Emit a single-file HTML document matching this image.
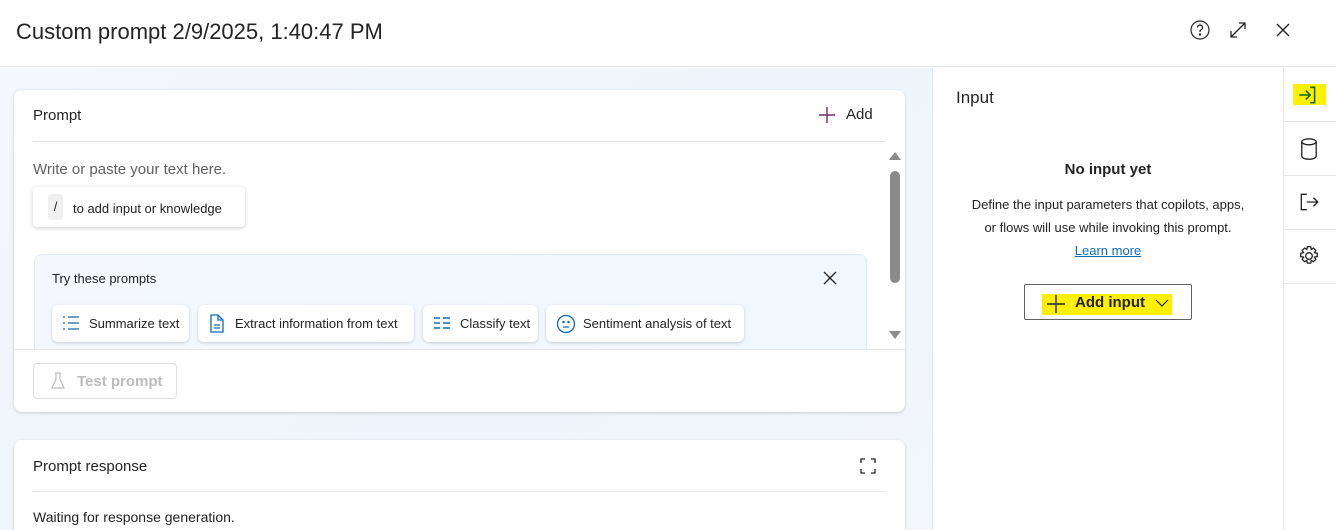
<!DOCTYPE html>
<html style="width:1336px;height:530px;overflow:hidden"><head><style>
*{box-sizing:border-box;margin:0;padding:0}
body{width:1336px;height:530px;overflow:hidden;font-family:"Liberation Sans",sans-serif;background:#fff;position:relative;color:#242424}
.abs{position:absolute}
.hdr{left:0;top:0;width:1336px;height:67px;border-bottom:1px solid #e6e6e6;background:#fff}
.left{left:0;top:68px;width:932px;height:462px;background:linear-gradient(135deg,#f4f7fb,#eef5fc 60%,#f3f7fb)}
.card{background:#fff;border-radius:8px;box-shadow:0 1px 3px rgba(0,0,0,.18)}
.chip{position:absolute;top:305px;height:37px;background:#fff;border-radius:6px;box-shadow:0 1px 3px rgba(0,0,0,.18);font-size:13px;line-height:37px;padding-left:37px;color:#242424}
.chip svg{position:absolute;left:10px;top:9px}
</style></head><body>
<div class="abs hdr"></div>
<div class="abs" style="left:16px;top:19px;font-size:22px;color:#242424">Custom prompt 2/9/2025, 1:40:47 PM</div>
<svg class="abs" style="left:1189px;top:19px" width="22" height="22" viewBox="0 0 22 22" fill="none" stroke="#242424" stroke-width="1.2"><circle cx="11" cy="11" r="9"/><path d="M8.5 8.5a2.5 2.5 0 1 1 3.5 2.3c-.7.3-1 .8-1 1.5v.7"/><circle cx="11" cy="15.5" r=".6" fill="#242424"/></svg>
<svg class="abs" style="left:1228px;top:20px" width="20" height="20" viewBox="0 0 20 20" fill="none" stroke="#242424" stroke-width="1.3"><path d="M3 17L17 3M11 3h6v6M3 11v6h6"/></svg>
<svg class="abs" style="left:1274px;top:21px" width="18" height="18" viewBox="0 0 18 18" stroke="#242424" stroke-width="1.4"><path d="M3 3l12 12M15 3L3 15"/></svg>

<div class="abs left"></div>
<div class="abs card" style="left:14px;top:90px;width:891px;height:322px"></div>
<div class="abs" style="left:33px;top:107px;font-size:15px">Prompt</div>
<svg class="abs" style="left:818px;top:106px" width="18" height="18" viewBox="0 0 18 18" stroke="#742774" stroke-width="1.4"><path d="M9 1v16M1 9h16"/></svg>
<div class="abs" style="left:846px;top:106px;font-size:15px">Add</div>
<div class="abs" style="left:33px;top:141px;width:852px;border-top:1px solid #e6e6e6"></div>
<div class="abs" style="left:33px;top:161px;font-size:15px;color:#616161">Write or paste your text here.</div>
<div class="abs" style="left:33px;top:187px;width:212px;height:40px;background:#fff;border-radius:4px;box-shadow:0 1px 4px rgba(0,0,0,.2)"></div>
<div class="abs" style="left:48px;top:194px;width:15px;height:26px;background:#f0f0f0;border-radius:3px;font-size:13px;line-height:26px;text-align:center">/</div>
<div class="abs" style="left:73px;top:201px;font-size:13px">to add input or knowledge</div>
<div class="abs" style="left:34px;top:254px;width:833px;height:96px;border:1px solid #dfe9f6;border-bottom:none;border-radius:8px 8px 0 0;background:linear-gradient(90deg,#f4f8fd,#f0f7fd)"></div>
<div class="abs" style="left:52px;top:271px;font-size:13px">Try these prompts</div>
<svg class="abs" style="left:822px;top:270px" width="16" height="16" viewBox="0 0 16 16" stroke="#242424" stroke-width="1.3"><path d="M2 2l12 12M14 2L2 14"/></svg>
<div class="chip" style="left:52px;width:137px">Summarize text<svg width="18" height="18" viewBox="0 0 18 18" stroke="#0f6cbd" stroke-width="1.3"><path d="M1 3h2M6 3h11M1 9h2M6 9h11M1 15h2M6 15h11"/></svg></div>
<div class="chip" style="left:198px;width:216px">Extract information from text<svg width="18" height="20" viewBox="0 0 18 20" fill="none" stroke="#0f6cbd" stroke-width="1.3"><path d="M3 1h7l5 5v12H3zM10 1v5h5M6 11h6M6 14h6"/></svg></div>
<div class="chip" style="left:423px;width:115px">Classify text<svg width="18" height="18" viewBox="0 0 18 18" stroke="#0f6cbd" stroke-width="1.6"><path d="M1 4h6M10 4h7M1 9h6M10 9h7M1 14h6M10 14h7"/></svg></div>
<div class="chip" style="left:546px;width:198px">Sentiment analysis of text<svg width="20" height="20" viewBox="0 0 20 20" fill="none" stroke="#0f6cbd" stroke-width="1.3"><circle cx="10" cy="10" r="8.5"/><circle cx="7.5" cy="8" r=".6" fill="#0f6cbd"/><circle cx="12.5" cy="8" r=".6" fill="#0f6cbd"/><path d="M7 13h6"/></svg></div>
<div class="abs" style="left:14px;top:349px;width:891px;border-top:1px solid #e6e6e6"></div>
<svg class="abs" style="left:888px;top:151px" width="14" height="10"><path d="M1 9L7 1l6 8z" fill="#8a8a8a"/></svg>
<div class="abs" style="left:890px;top:171px;width:10px;height:112px;background:#8a8a8a;border-radius:5px"></div>
<svg class="abs" style="left:888px;top:330px" width="14" height="10"><path d="M1 1h12L7 9z" fill="#8a8a8a"/></svg>
<div class="abs" style="left:33px;top:363px;width:144px;height:36px;border:1px solid #e0e0e0;border-radius:4px"></div>
<svg class="abs" style="left:50px;top:372px" width="16" height="18" viewBox="0 0 16 18" fill="none" stroke="#bdbdbd" stroke-width="1.2"><path d="M5 1h6M6 1v6L2 16h12L10 7V1"/></svg>
<div class="abs" style="left:77px;top:373px;font-size:15px;font-weight:bold;color:#bdbdbd">Test prompt</div>

<div class="abs card" style="left:14px;top:440px;width:891px;height:90px;border-radius:8px 8px 0 0"></div>
<div class="abs" style="left:33px;top:458px;font-size:15px">Prompt response</div>
<svg class="abs" style="left:860px;top:458px" width="16" height="16" viewBox="0 0 16 16" fill="none" stroke="#242424" stroke-width="1.3"><path d="M1 5V1h4M11 1h4v4M15 11v4h-4M5 15H1v-4"/></svg>
<div class="abs" style="left:33px;top:491px;width:852px;border-top:1px solid #e6e6e6"></div>
<div class="abs" style="left:33px;top:509px;font-size:14px">Waiting for response generation.</div>

<div class="abs" style="left:932px;top:68px;width:1px;height:462px;background:#e6e6e6"></div>
<div class="abs" style="left:956px;top:88px;font-size:17px">Input</div>
<div class="abs" style="left:933px;top:161px;width:350px;text-align:center;font-size:15px;font-weight:bold">No input yet</div>
<div class="abs" style="left:933px;top:193px;width:350px;text-align:center;font-size:13px;line-height:23px">Define the input parameters that copilots, apps,<br>or flows will use while invoking this prompt.<br><span style="color:#0f6cbd;text-decoration:underline">Learn more</span></div>
<div class="abs" style="left:1024px;top:284px;width:168px;height:36px;border:1px solid #616161;border-radius:2px"></div>
<div class="abs" style="left:1042px;top:294px;width:130px;height:21px;background:#fff000"></div>
<svg class="abs" style="left:1046px;top:294px" width="20" height="20" viewBox="0 0 20 20" stroke="#242424" stroke-width="1.4"><path d="M10 1v18M1 10h18"/></svg>
<div class="abs" style="left:1075px;top:294px;font-size:15px;font-weight:bold">Add input</div>
<svg class="abs" style="left:1155px;top:298px" width="14" height="10" viewBox="0 0 14 10" fill="none" stroke="#242424" stroke-width="1.2"><path d="M1 2l6 6 6-6"/></svg>

<div class="abs" style="left:1283px;top:68px;width:1px;height:462px;background:#e6e6e6"></div>
<div class="abs" style="left:1284px;top:121px;width:52px;border-top:1px solid #e6e6e6"></div>
<div class="abs" style="left:1284px;top:175px;width:52px;border-top:1px solid #e6e6e6"></div>
<div class="abs" style="left:1284px;top:229px;width:52px;border-top:1px solid #e6e6e6"></div>
<div class="abs" style="left:1284px;top:283px;width:52px;border-top:1px solid #e6e6e6"></div>
<div class="abs" style="left:1293px;top:84px;width:33px;height:21px;background:#fff000"></div>
<svg class="abs" style="left:1297px;top:84px" width="22" height="22" viewBox="0 0 20 20" fill="none" stroke="#0b6a0b" stroke-width="1.4"><path d="M12 3h4v14h-4M2 10h10M8 6l4 4-4 4"/></svg>
<svg class="abs" style="left:1298px;top:137px" width="22" height="24" viewBox="0 0 18 20" fill="none" stroke="#242424" stroke-width="1.1"><ellipse cx="9" cy="4" rx="6" ry="2.5"/><path d="M3 4v12c0 1.4 2.7 2.5 6 2.5s6-1.1 6-2.5V4"/></svg>
<svg class="abs" style="left:1298px;top:191px" width="22" height="22" viewBox="0 0 20 20" fill="none" stroke="#242424" stroke-width="1.2"><path d="M8 3H3v14h5M8 10h10M14 6l4 4-4 4"/></svg>
<svg class="abs" style="left:1298px;top:245px" width="22" height="22" viewBox="0 0 20 20" fill="none" stroke="#242424" stroke-width="1.2"><circle cx="10" cy="10" r="3"/><path d="M8.5 1.5h3l.5 2.5 2-1.2 2.2 2.2-1.2 2 2.5.5v3l-2.5.5 1.2 2-2.2 2.2-2-1.2-.5 2.5h-3l-.5-2.5-2 1.2-2.2-2.2 1.2-2-2.5-.5v-3l2.5-.5-1.2-2 2.2-2.2 2 1.2z"/></svg>
</body></html>
